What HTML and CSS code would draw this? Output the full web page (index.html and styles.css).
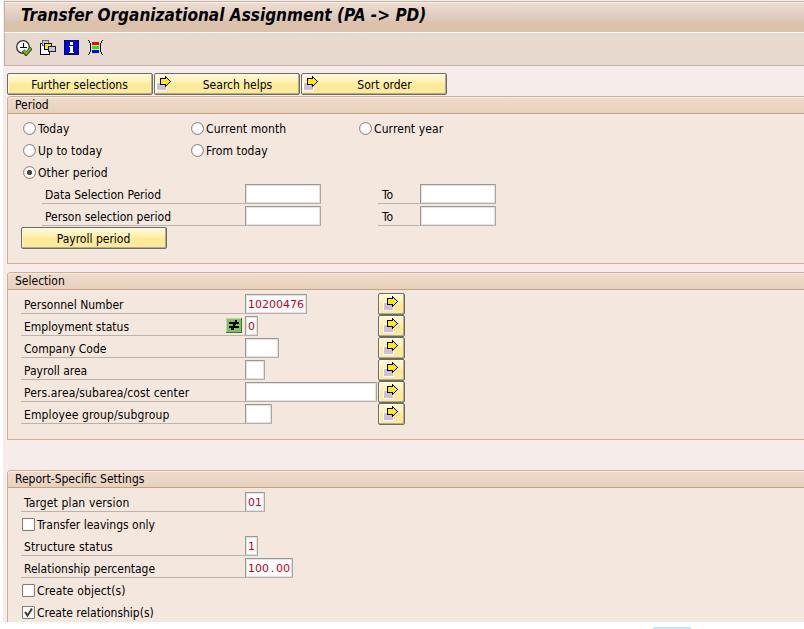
FILE: index.html
```html
<!DOCTYPE html>
<html lang="en">
  <head>
    <meta charset="UTF-8" />
    <meta name="viewport" content="width=device-width, initial-scale=1.0" />
    <title>Transfer Organizational Assignment (PA -&gt; PD)</title>
    <link rel="stylesheet" href="styles.css">
  </head>
  <body>
    <!-- shared icon -->
    <svg class="defs" width="0" height="0">
      <symbol id="arrow" viewBox="0 0 16 16" shape-rendering="crispEdges">
        <rect x="-1" y="6" width="11" height="9" fill="#fff" />
        <rect x="0" y="7" width="9" height="7" fill="#d2bedb" />
        <path d="M3 2h5V0h1v1h1v1h1v1h1v1h1v1h1v1h-1v1h-1v1h-1v1h-1v1H9v1H8V9H3z" fill="#000" />
        <path d="M4 3h5V2h1v1h1v1h1v1h1v1h-1v1h-1v1h-1v1H9V8H4z" fill="#ffeb00" />
      </symbol>
    </svg>

    <div class="window">
      <header class="titlebar"><h1>Transfer Organizational Assignment (PA -&gt; PD)</h1></header>
      <div class="toolbar">
        <svg width="16" height="16" viewBox="0 0 16 16">
          <circle cx="7" cy="7" r="6.300" fill="#fff" stroke="#333" stroke-width="1.300" />
          <path d="M7.500 3v5M4 7.500h7" fill="none" stroke="#000" />
          <path d="M7 10.500l3 3.500L15.500 8" fill="none" stroke="#1c4a0c" stroke-width="3.500" />
          <path d="M7.300 10.500l2.800 3L15 8.300" fill="none" stroke="#6fb52c" stroke-width="2" />
        </svg>
        <svg width="16" height="16" viewBox="0 0 16 16" shape-rendering="crispEdges">
          <path d="M0 3h10v12H0z" fill="#000" />
          <path d="M1 4h8v10H1z" fill="#fff" />
          <path d="M2 0h7v6H2z" fill="#666" />
          <path d="M3 1h5v4H3z" fill="#c6c6da" />
          <path d="M4 3h8v7H4z" fill="#000" />
          <path d="M5 4h6v5H5z" fill="#ffe800" />
          <path d="M8 6h8v6H8z" fill="#222" />
          <path d="M9 7h6v4H9z" fill="#c6c6da" />
        </svg>
        <svg width="16" height="16" viewBox="0 0 16 16" shape-rendering="crispEdges">
          <path d="M0 0h15v15H0z" fill="#000050" />
          <path d="M1 1h13v13H1z" fill="#0000e6" />
          <path d="M6 2h3v3H6zM5 6h4v6h1v1H5v-1h1V7H5z" fill="#fff" />
        </svg>
        <svg width="16" height="16" viewBox="0 0 16 16" shape-rendering="crispEdges">
          <path d="M0 0h1v1h1v2h1v9H2v2H1v1H0v-1h1v-2h1V3H1V1H0zM14 0h1v1h-1v2h-1v9h1v2h1v1h-1v-1h-1v-2h-1V3h1V1h1z" fill="#000" />
          <path d="M4 2h7v3H4z" fill="#f00" />
          <path d="M4 6h7v3H4z" fill="#0f0" />
          <path d="M4 10h7v3H4z" fill="#00f" />
        </svg>
      </div>

      <div class="actions">
        <button class="btn">Further selections</button>
        <button class="btn with-icon"><svg><use href="#arrow" /></svg>Search helps</button>
        <button class="btn with-icon"><svg><use href="#arrow" /></svg>Sort order</button>
      </div>

      <section class="group period">
        <h2>Period</h2>
        <div class="row radios">
          <label><i class="radio"></i>Today</label>
          <label><i class="radio"></i>Current month</label>
          <label><i class="radio"></i>Current year</label>
        </div>
        <div class="row radios">
          <label><i class="radio"></i>Up to today</label>
          <label><i class="radio"></i>From today</label>
        </div>
        <div class="row radios">
          <label><i class="radio checked"></i>Other period</label>
        </div>
        <div class="row indent">
          <span class="label">Data Selection Period</span>
          <span class="field w-date"></span>
          <span class="label to">To</span>
          <span class="field w-date"></span>
        </div>
        <div class="row indent">
          <span class="label">Person selection period</span>
          <span class="field w-date"></span>
          <span class="label to">To</span>
          <span class="field w-date"></span>
        </div>
        <button class="btn payroll">Payroll period</button>
      </section>

      <section class="group selection">
        <h2>Selection</h2>
        <div class="row">
          <span class="label">Personnel Number</span>
          <span class="field w-8">10200476</span>
          <button class="btn more"><svg><use href="#arrow" /></svg></button>
        </div>
        <div class="row">
          <span class="label">Employment status
            <svg class="not-equal" viewBox="0 0 16 15" shape-rendering="crispEdges">
              <path d="M0 0h16v15H0z" fill="#367a24" />
              <path d="M0 0h15v14H0z" fill="#b5dc9c" />
              <path d="M1 1h14v13H1z" fill="#85bd68" />
              <path d="M3 4h10v2H3zM3 8h10v2H3z" fill="#000" />
              <path d="M9 2h2v2h-1v3H9v2H8v3H5v-2h1V8h1V6h1V4h1z" fill="#000" />
            </svg>
          </span>
          <span class="field w-1">0</span>
          <button class="btn more"><svg><use href="#arrow" /></svg></button>
        </div>
        <div class="row">
          <span class="label">Company Code</span>
          <span class="field w-4"></span>
          <button class="btn more"><svg><use href="#arrow" /></svg></button>
        </div>
        <div class="row">
          <span class="label">Payroll area</span>
          <span class="field w-2"></span>
          <button class="btn more"><svg><use href="#arrow" /></svg></button>
        </div>
        <div class="row">
          <span class="label wide">Pers.area/subarea/cost center</span>
          <span class="field w-18"></span>
          <button class="btn more"><svg><use href="#arrow" /></svg></button>
        </div>
        <div class="row">
          <span class="label wide">Employee group/subgroup</span>
          <span class="field w-3"></span>
          <button class="btn more"><svg><use href="#arrow" /></svg></button>
        </div>
      </section>

      <section class="group report">
        <h2>Report-Specific Settings</h2>
        <div class="row">
          <span class="label wide">Target plan version</span>
          <span class="field w-2">01</span>
        </div>
        <label class="row check"><i class="box"></i>Transfer leavings only</label>
        <div class="row">
          <span class="label wide">Structure status</span>
          <span class="field w-1">1</span>
        </div>
        <div class="row">
          <span class="label">Relationship percentage</span>
          <span class="field w-6">100<span class="dot">.</span>00</span>
        </div>
        <label class="row check wide"><i class="box"></i>Create object(s)</label>
        <label class="row check">
          <i class="box"><svg viewBox="0 0 11 11"><path d="M2 5l2.500 3.500L9 1.500" fill="none" stroke="#3c3c28" stroke-width="2" /></svg></i>Create relationship(s)
        </label>
      </section>
    </div>
    <div class="marker"></div>
  </body>
</html>
```

FILE: styles.css
```css
* {
  box-sizing: border-box;
}

body {
  margin: 0;
  height: 629px;
  overflow: hidden;
  background: #fff;
  color: #000;
  font-family: "DejaVu Sans Condensed", "DejaVu Sans", sans-serif;
  font-stretch: condensed;
  font-size: 12px;
}

.defs {
  display: block;
}

.window {
  height: 622px;
  margin-left: 3px;
  padding-top: 1px;
  background: #f6edea;
  overflow: hidden;
}

/* title and icons */
.titlebar {
  height: 32px;
  margin-left: 1px;
  border: 1px solid #c1b3a5;
  border-width: 1px 0 0 1px;
  border-bottom: 1px solid #fff;
  box-shadow: inset 0 1px #fbf3ea;
  background: linear-gradient(#efdfd0, #dcc7b9 60%, #dcc2aa 64%, #dcc2aa);
}

.titlebar h1 {
  margin: 0;
  padding-left: 16px;
  font-size: 17px;
  font-style: italic;
  line-height: 26px;
  letter-spacing: 0.02px;
  white-space: nowrap;
}

.toolbar {
  display: flex;
  gap: 8px;
  height: 33px;
  margin-left: 1px;
  padding: 7px 0 0 11px;
  border-left: 1px solid #c1b3a5;
  border-bottom: 1px solid #c1b3a5;
  background: #e8d9ce;
}

/* buttons */
.btn {
  display: flex;
  align-items: center;
  justify-content: center;
  position: relative;
  width: 146px;
  height: 22px;
  padding: 2px 1px 0 0;
  border: 1px solid #6b6b6b;
  border-radius: 2px;
  box-shadow: inset -1px -1px #b5aa83, inset 1px 1px #fffbe6;
  background: linear-gradient(#fff9da, #fdf0ac 45%, #fdea96 50%, #fdeb9d);
  color: #000;
  font: inherit;
}

.btn svg {
  position: absolute;
  left: 2px;
  top: 2px;
  width: 16px;
  height: 16px;
  overflow: visible;
}

.with-icon {
  padding-left: 22px;
}

.btn.more {
  width: 27px;
  margin-left: auto;
}

.btn.more svg {
  left: 5px;
}

#arrow {
  overflow: visible;
}

.actions {
  display: flex;
  gap: 1px;
  margin: 7px 0 1px 4px;
}

/* group boxes */
.group {
  margin-left: 4px;
  border: 1px solid #cdb091;
  border-right: 0;
  border-top-left-radius: 4px;
  background: #f4e7dd;
}

.group h2 {
  height: 17px;
  margin: 0 0 3px;
  padding-left: 7px;
  border-bottom: 1px solid #c2a283;
  border-top-left-radius: 3px;
  box-shadow: inset 0 1px #faeee4;
  background: linear-gradient(#efdace, #e7d1bc);
  font-size: 12px;
  font-weight: normal;
  line-height: 16px;
}

.period {
  height: 168px;
}

.selection {
  height: 168px;
  margin-top: 8px;
}

.report {
  height: 160px;
  margin-top: 30px;
}

.row {
  display: flex;
  height: 22px;
  padding: 1px 0 0 13px;
  line-height: 22px;
}

.selection .row {
  width: 397px;
  padding-top: 0;
}

.selection .label,
.selection .field {
  margin-top: 1px;
}

.label {
  position: relative;
  width: 224px;
  height: 20px;
  padding-left: 3px;
  border-bottom: 1px solid #b9b3b0;
  white-space: nowrap;
}

.wide {
  letter-spacing: 0.13px;
}

.indent {
  padding-left: 34px;
}

.indent .label {
  width: 203px;
}

.indent .to {
  width: 42px;
  margin-left: 57px;
  padding-left: 4px;
}

.field {
  height: 20px;
  padding-left: 2px;
  border: 1px solid #9b9793;
  border-right-color: #a9a5a1;
  border-bottom-color: #b3afab;
  border-radius: 1px;
  box-shadow: inset 0 0 1px 1px #e2e0de;
  background: #fff;
  color: #c00022;
  font-family: "DejaVu Sans", sans-serif;
  font-stretch: normal;
  font-size: 11px;
  line-height: 19px;
}

.dot {
  display: inline-block;
  width: 7px;
  text-align: center;
}

.w-1 { width: 13px; }
.w-2 { width: 20px; }
.w-3 { width: 27px; }
.w-4 { width: 34px; }
.w-6 { width: 48px; }
.w-8 { width: 62px; }
.w-18 { width: 132px; }
.w-date { width: 76px; }

.not-equal {
  position: absolute;
  right: 3px;
  top: 2px;
  width: 16px;
  height: 15px;
}

.payroll {
  margin-left: 13px;
}

/* radios and checkboxes */
.radios {
  padding-left: 15px;
}

.radios label {
  display: flex;
  width: 168px;
  gap: 2px;
  letter-spacing: 0.1px;
}

.radio {
  width: 13px;
  height: 13px;
  margin-top: 4px;
  border: 1px solid #8b8885;
  border-radius: 50%;
  background: #fff;
  box-shadow: inset 0 0 1px #999;
}

.radio.checked {
  background: radial-gradient(circle, #4d4938 2.4px, #fff 3px);
}

.check {
  gap: 2px;
  padding-left: 14px;
}

.box {
  width: 13px;
  height: 13px;
  margin-top: 4px;
  border: 1px solid #827f7b;
  border-radius: 1px;
  background: #fff;
  box-shadow: inset 0 0 1px #aaa;
}

.box svg {
  display: block;
}

/* sliver of the floating tab below the window */
.marker {
  width: 38px;
  height: 2px;
  margin: 5px 0 0 653px;
  background: #bfe9f8;
}
```
